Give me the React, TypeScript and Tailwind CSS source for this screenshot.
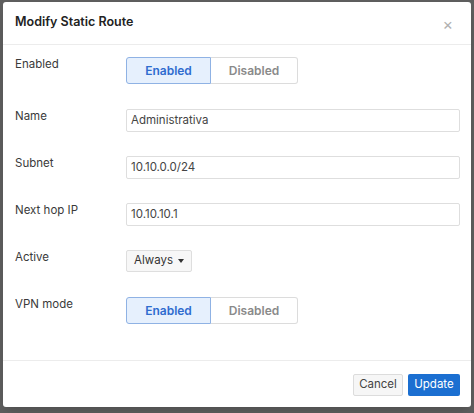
function Toggle() {
  return (
    <div className="flex h-[27px]">
      <button className="w-[85px] rounded-l-[3px] border border-[#8fb2e4] bg-[#e6f0fd] text-[12px] font-semibold text-[#2f6ccf]">
        Enabled
      </button>
      <button className="w-[87px] rounded-r-[3px] border border-l-0 border-[#dcdcdc] bg-white text-[12px] font-semibold text-[#8a8a8a]">
        Disabled
      </button>
    </div>
  );
}

function Field({ value }: { value: string }) {
  return (
    <div className="flex h-[23px] flex-1 items-center rounded-[2px] border border-[#dedede] bg-white px-[4px] text-[11.5px] text-[#444]">
      {value}
    </div>
  );
}

function Row({ label, children, h }: { label: string; children: React.ReactNode; h: string }) {
  return (
    <div className={`flex ${h}`}>
      <div className="w-[111px] text-[11.5px] leading-[14px] text-[#3a3a3a]">{label}</div>
      <div className="flex flex-1 items-start">{children}</div>
    </div>
  );
}

export default function App() {
  return (
    <div
      className="h-[413px] w-[474px] bg-[#5e5e5e] pt-[2px] pl-[3px] pr-[3px]"
      style={{ fontFamily: "Inter, 'Noto Sans', sans-serif" }}
    >
      <div className="flex h-[405px] flex-col rounded-[3px] bg-white shadow-lg">
        {/* HEADER */}
        <div className="flex h-[43px] items-start justify-between border-b border-[#ececec] pl-[12px] pr-[18px] pt-[11px]">
          <div className="text-[12.5px] font-semibold text-[#222]">Modify Static Route</div>
          <div className="pt-[3px] text-[16px] leading-none text-[#b0b0b0]">×</div>
        </div>

        {/* BODY */}
        <div className="flex flex-1 flex-col pl-[12px] pr-[11px] pt-[12px]">
          <Row label="Enabled" h="h-[52px]">
            <Toggle />
          </Row>
          <Row label="Name" h="h-[47px]">
            <Field value="Administrativa" />
          </Row>
          <Row label="Subnet" h="h-[47px]">
            <Field value="10.10.0.0/24" />
          </Row>
          <Row label="Next hop IP" h="h-[47px]">
            <Field value="10.10.10.1" />
          </Row>
          <Row label="Active" h="h-[47px]">
            <div className="flex h-[22px] items-center gap-[5px] rounded-[2px] border border-[#dedede] bg-[#f7f7f7] px-[7px] text-[11.5px] text-[#333]">
              Always
              <span className="h-0 w-0 border-x-[3px] border-t-[4px] border-x-transparent border-t-[#333]" />
            </div>
          </Row>
          <Row label="VPN mode" h="h-[40px]">
            <Toggle />
          </Row>
        </div>

        {/* FOOTER */}
        <div className="flex h-[47px] items-start justify-end gap-[5px] border-t border-[#ececec] pr-[11px] pt-[13px]">
          <button className="h-[22px] w-[50px] rounded-[2px] border border-[#dcdcdc] bg-[#f6f6f6] text-[11.5px] text-[#444]">
            Cancel
          </button>
          <button className="h-[22px] w-[52px] rounded-[2px] bg-[#1b6fd1] text-[11.5px] text-white">
            Update
          </button>
        </div>
      </div>
    </div>
  );
}
